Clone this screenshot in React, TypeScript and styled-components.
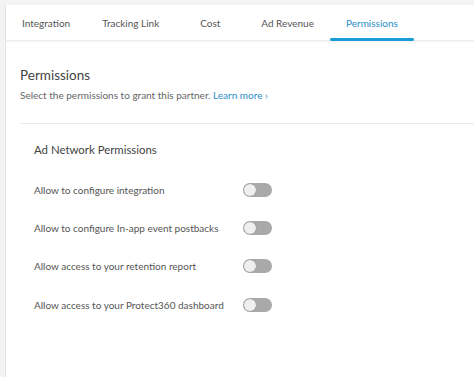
import React, { useState } from "react";
import styled, { createGlobalStyle } from "styled-components";

const GlobalStyle = createGlobalStyle`
  html, body {
    margin: 0;
    padding: 0;
    background: #f3f3f3;
  }
  body {
    font-family: Lato, "Open Sans", "Liberation Sans", sans-serif;
    -webkit-font-smoothing: antialiased;
  }
`;

const tabs = ["Integration", "Tracking Link", "Cost", "Ad Revenue", "Permissions"];

const permissions = [
  "Allow to configure integration",
  "Allow to configure In-app event postbacks",
  "Allow access to your retention report",
  "Allow access to your Protect360 dashboard",
];

const App: React.FC = () => {
  const [active, setActive] = useState(4);
  const [enabled, setEnabled] = useState<boolean[]>(permissions.map(() => false));

  const toggle = (i: number) =>
    setEnabled((prev) => prev.map((v, idx) => (idx === i ? !v : v)));

  return (
    <>
      <GlobalStyle />
      <Page>
        <Panel>
          <TabBar>
            {tabs.map((t, i) => (
              <Tab key={t} $active={i === active} onClick={() => setActive(i)}>
                {t}
              </Tab>
            ))}
          </TabBar>

          <Header>
            <Heading>Permissions</Heading>
            <Subtitle>
              Select the permissions to grant this partner.{" "}
              <LearnMore href="#">Learn more ›</LearnMore>
            </Subtitle>
          </Header>

          <Section>
            <SectionTitle>Ad Network Permissions</SectionTitle>
            <Rows>
              {permissions.map((p, i) => (
                <Row key={p}>
                  <Label>{p}</Label>
                  <Switch
                    $on={enabled[i]}
                    role="switch"
                    aria-checked={enabled[i]}
                    onClick={() => toggle(i)}
                  >
                    <Knob $on={enabled[i]} />
                  </Switch>
                </Row>
              ))}
            </Rows>
          </Section>
        </Panel>
      </Page>
    </>
  );
};

const Page = styled.div`
  min-height: 377px;
  padding: 5px 0 0 5px;
  box-sizing: border-box;
  display: flex;
`;

const Panel = styled.div`
  flex: 1;
  background: #ffffff;
  border-left: 1px solid #e4e4e4;
  min-height: 372px;
`;

const TabBar = styled.div`
  display: flex;
  height: 35px;
  border-bottom: 1px solid #ececec;
  box-shadow: 0 1px 2px rgba(0, 0, 0, 0.05);
`;

const Tab = styled.div<{ $active: boolean }>`
  position: relative;
  box-sizing: border-box;
  min-width: 70px;
  padding: 0 16px;
  display: flex;
  align-items: center;
  justify-content: center;
  font-size: 10px;
  color: ${({ $active }) => ($active ? "#2a8ec9" : "#555")};
  cursor: pointer;

  &::after {
    content: "";
    position: absolute;
    left: 0;
    right: 0;
    bottom: -1px;
    height: 3px;
    border-radius: 2px;
    background: ${({ $active }) => ($active ? "#1b9bd7" : "transparent")};
  }
`;

const Header = styled.div`
  margin: 0 0 0 14px;
  padding: 25px 0 21px;
  border-bottom: 1px solid #ebebeb;
`;

const Heading = styled.div`
  font-size: 13.5px;
  color: #444;
  line-height: 18px;
`;

const Subtitle = styled.div`
  margin-top: 4px;
  font-size: 10px;
  color: #666;
  line-height: 14px;
`;

const LearnMore = styled.a`
  color: #2a8ec9;
  text-decoration: none;
`;

const Section = styled.div`
  padding: 18px 0 0 28px;
`;

const SectionTitle = styled.div`
  font-size: 11.4px;
  color: #444;
  line-height: 16px;
`;

const Rows = styled.div`
  margin-top: 24px;
  display: flex;
  flex-direction: column;
  gap: 22.2px;
`;

const Row = styled.div`
  display: flex;
  align-items: center;
  height: 16px;
`;

const Label = styled.div`
  width: 209px;
  font-size: 10px;
  color: #555;
`;

const Switch = styled.div<{ $on: boolean }>`
  position: relative;
  width: 29px;
  height: 14px;
  border-radius: 7px;
  background: ${({ $on }) => ($on ? "#1b9bd7" : "#a9a9a9")};
  cursor: pointer;
`;

const Knob = styled.div<{ $on: boolean }>`
  position: absolute;
  top: 1px;
  left: ${({ $on }) => ($on ? "16px" : "1px")};
  width: 12px;
  height: 12px;
  border-radius: 50%;
  background: #efefef;
  box-shadow: 0 0 1px rgba(0, 0, 0, 0.3);
`;

export default App;
